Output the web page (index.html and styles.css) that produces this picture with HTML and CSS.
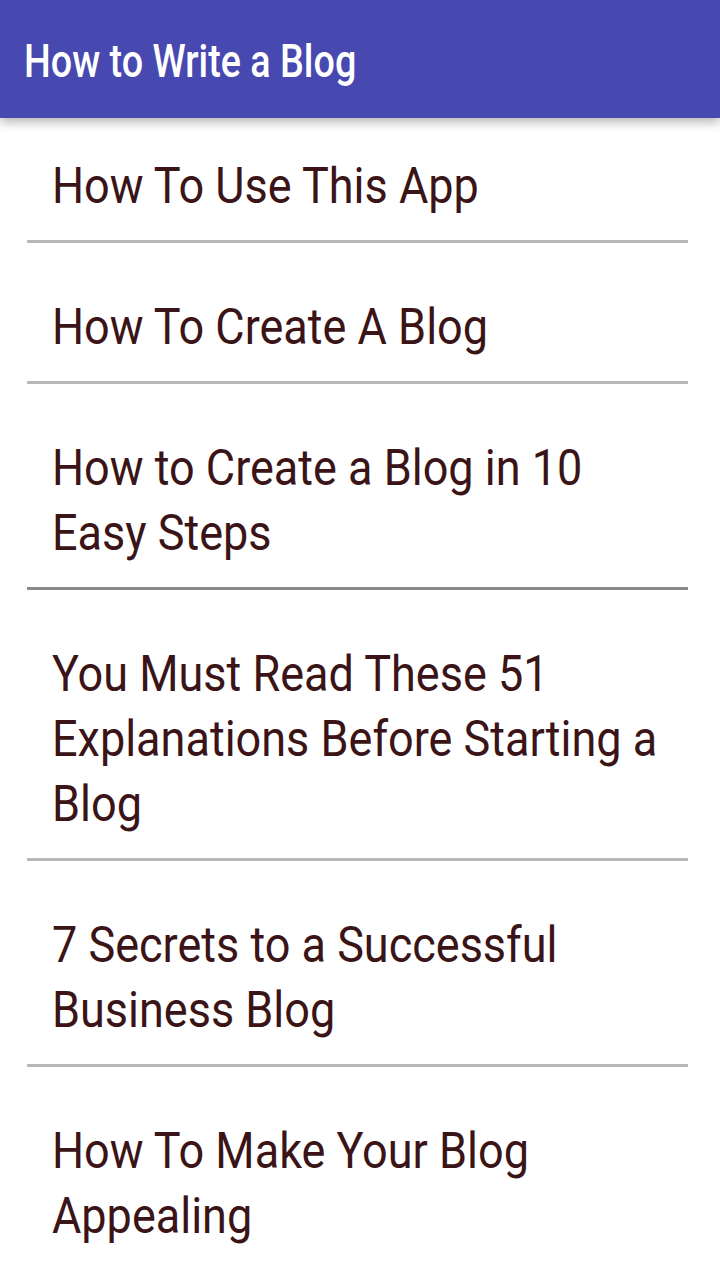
FILE: index.html
```html
<!DOCTYPE html>
<html>
<head>
<meta charset="utf-8">
<link rel="stylesheet" href="styles.css">
</head>
<body>
<header class="appbar"><span class="title">How to Write a Blog</span></header>
<ul class="list">
  <li class="item"><span class="text">How To Use This App</span></li>
  <li class="item"><span class="text">How To Create A Blog</span></li>
  <li class="item dark"><span class="text">How to Create a Blog in 10 Easy Steps</span></li>
  <li class="item"><span class="text">You Must Read These 51 Explanations Before Starting a Blog</span></li>
  <li class="item"><span class="text">7 Secrets to a Successful Business Blog</span></li>
  <li class="item"><span class="text">How To Make Your Blog Appealing</span></li>
</ul>
</body>
</html>
```

FILE: styles.css
```css
html, body {
  margin: 0;
  padding: 0;
  background: #ffffff;
  width: 720px;
  height: 1280px;
  overflow: hidden;
  font-family: Roboto, "Liberation Sans", sans-serif;
}
.appbar {
  position: relative;
  z-index: 2;
  height: 118px;
  background: #4749b0;
  display: flex;
  align-items: center;
  padding-left: 24px;
  box-shadow: 0 4px 10px rgba(0,0,0,0.3);
}
.title {
  display: block;
  color: #ffffff;
  font-size: 46px;
  font-weight: 500;
  padding-top: 4px;
  white-space: nowrap;
  transform: scaleX(0.82);
  transform-origin: left center;
}
.list {
  list-style: none;
  margin: 0;
  padding: 0;
}
.item {
  margin: 0 32px 0 27px;
  padding: 52px 16px 21px 25px;
  border-bottom: 3px solid #b8b8b8;
}
.item:first-child {
  padding-top: 36px;
}
.item:last-child {
  border-bottom: none;
}
.item.dark {
  border-bottom-color: #8a8a8a;
}
.text {
  display: block;
  width: calc(100% / 0.9);
  color: #3a1417;
  font-size: 50px;
  line-height: 65px;
  transform: scaleX(0.9);
  transform-origin: left top;
}
```
